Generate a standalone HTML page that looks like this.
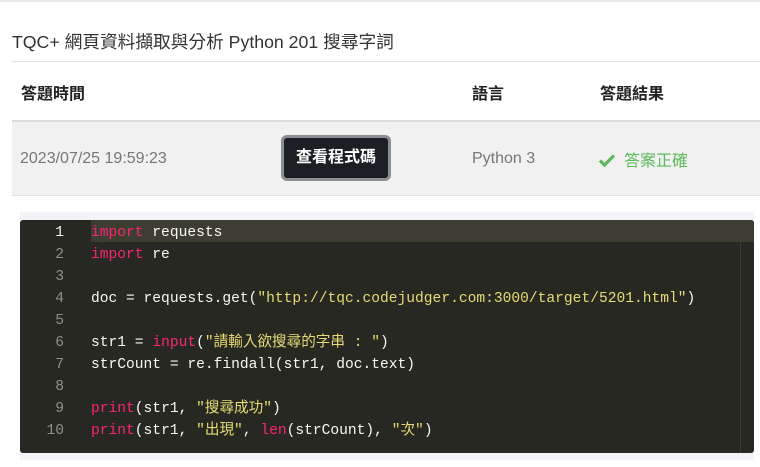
<!DOCTYPE html>
<html><head><meta charset="utf-8"><style>
*{margin:0;padding:0;box-sizing:border-box}
body{width:760px;height:467px;background:#fff;font-family:"Liberation Sans","Noto Sans CJK TC",sans-serif;position:relative;overflow:hidden;color:#212529}
.abs{position:absolute}
.title{left:12px;top:28px;font-size:17.7px;color:#333;white-space:nowrap}
.hd{top:80px;font-size:16px;font-weight:bold;color:#222}
.row{left:12px;top:120px;width:748px;height:76px;background:#f1f1f1;border-top:2px solid #dcdcdc;border-bottom:1px solid #e3e3e3}
.btn{left:281px;top:135px;width:110px;height:46px;background:#1b1e22;border:3px solid #8a8d91;border-radius:6px;color:#fff;font-size:16px;font-weight:bold;text-align:center;line-height:40px}
.cell{top:150px;font-size:16px;color:#777}
.code{left:20px;top:220px;width:734px;height:233px;background:#272822;border-radius:3px;font-family:"Liberation Mono","Noto Sans CJK TC",monospace;font-size:14.6px;color:#f8f8f2}
.ln{position:absolute;left:0;width:44px;text-align:right;color:#8f908a;height:22px;line-height:22px;padding-top:2px}
.cl{position:absolute;left:71px;white-space:pre;height:22px;line-height:22px;padding-top:2px}
.k{color:#f92672}.s{color:#e6db74}
</style></head><body>
<div class="abs" style="left:0;top:0;width:760px;height:2px;background:#e8e8e8"></div>
<div class="abs title">TQC+ 網頁資料擷取與分析 Python 201 搜尋字詞</div>
<div class="abs" style="left:12px;top:61px;width:748px;height:1px;background:#e6e6e6"></div>
<div class="abs hd" style="left:21px">答題時間</div>
<div class="abs hd" style="left:472px">語言</div>
<div class="abs hd" style="left:600px">答題結果</div>
<div class="abs row"></div>
<div class="abs cell" style="left:20px">2023/07/25 19:59:23</div>
<div class="abs btn">查看程式碼</div>
<div class="abs cell" style="left:472px">Python 3</div>
<div class="abs cell" style="left:598px;top:147px;color:#5cb85c"><svg width="18" height="14" viewBox="0 0 18 14" style="vertical-align:-1px;margin-right:8px"><path d="M2 7.5l4.5 4.5L16 2.5" fill="none" stroke="#5cb85c" stroke-width="3.2"/></svg>答案正確</div>
<div class="abs" style="left:20px;top:212px;width:734px;height:248px;background:#f4f4f8"></div>
<div class="abs code">
<div class="abs" style="left:71px;top:0;width:663px;height:22px;background:#3e3d32;border-radius:0 3px 0 0"></div>
<div class="abs" style="left:720px;top:0;width:1px;height:233px;background:#3b3c35"></div>
<div class="ln" style="top:0;color:#f8f8f2">1</div><div class="cl" style="top:0"><span class="k">import</span> requests</div>
<div class="ln" style="top:22px">2</div><div class="cl" style="top:22px"><span class="k">import</span> re</div>
<div class="ln" style="top:44px">3</div>
<div class="ln" style="top:66px">4</div><div class="cl" style="top:66px">doc = requests.get(<span class="s">"http://tqc.codejudger.com:3000/target/5201.html"</span>)</div>
<div class="ln" style="top:88px">5</div>
<div class="ln" style="top:110px">6</div><div class="cl" style="top:110px">str1 = <span class="k">input</span>(<span class="s">"請輸入欲搜尋的字串 : "</span>)</div>
<div class="ln" style="top:132px">7</div><div class="cl" style="top:132px">strCount = re.findall(str1, doc.text)</div>
<div class="ln" style="top:154px">8</div>
<div class="ln" style="top:176px">9</div><div class="cl" style="top:176px"><span class="k">print</span>(str1, <span class="s">"搜尋成功"</span>)</div>
<div class="ln" style="top:198px">10</div><div class="cl" style="top:198px"><span class="k">print</span>(str1, <span class="s">"出現"</span>, <span class="k">len</span>(strCount), <span class="s">"次"</span>)</div>
</div>
</body></html>
